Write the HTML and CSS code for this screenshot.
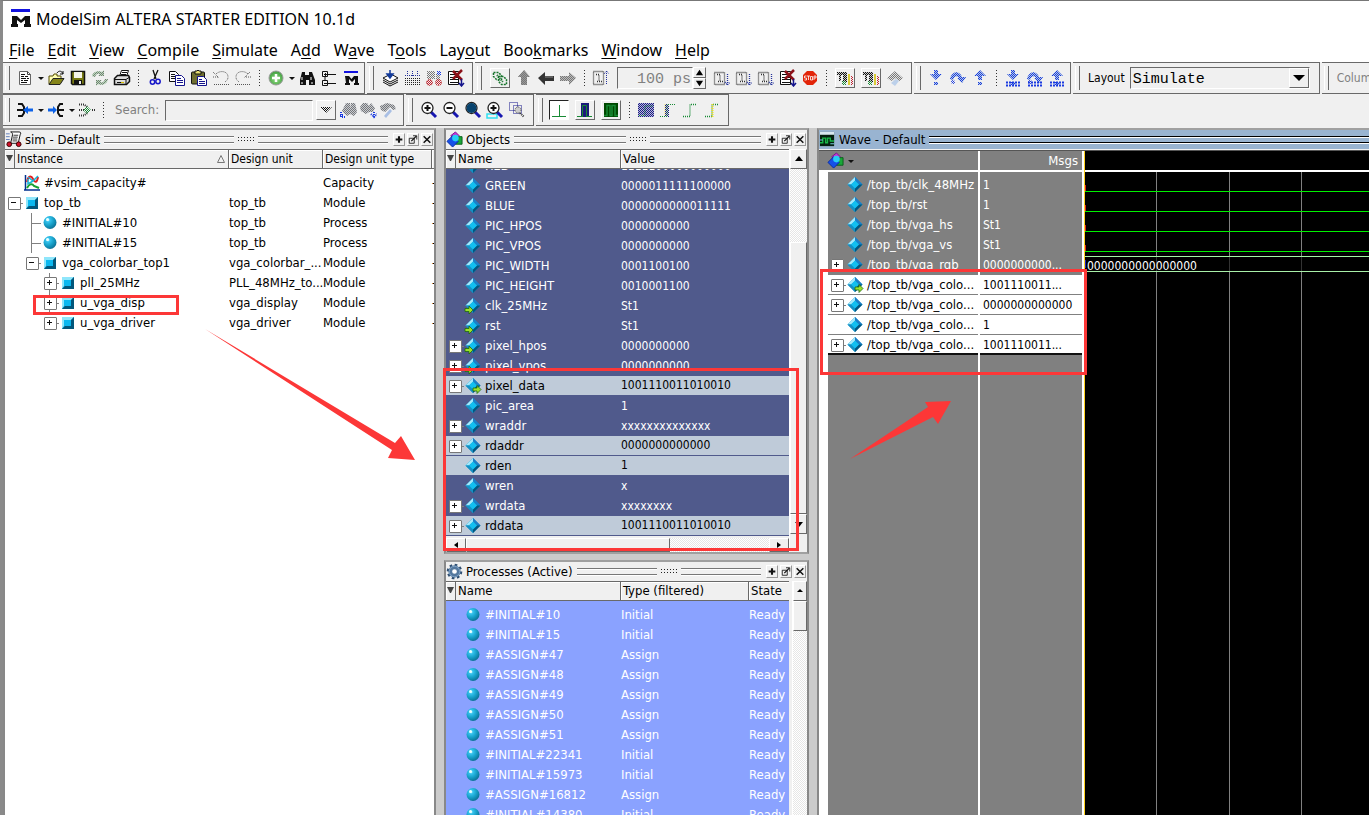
FILE: index.html
```html
<!DOCTYPE html>
<html lang="en">
<head>
<meta charset="utf-8">
<title>ModelSim ALTERA STARTER EDITION 10.1d</title>
<link rel="stylesheet" href="styles.css">
</head>
<body>
<svg class="defs" aria-hidden="true">
  <defs>
    <pattern id="pk" width="2" height="2" patternUnits="userSpaceOnUse"><path d="M0 0h1v1H0zM1 1h1v1H1z" fill="#111"/></pattern>
    <pattern id="pg" width="2" height="2" patternUnits="userSpaceOnUse"><path d="M0 0h1v1H0zM1 1h1v1H1z" fill="#777"/></pattern>
    <pattern id="pb" width="2" height="2" patternUnits="userSpaceOnUse"><path d="M0 0h1v1H0zM1 1h1v1H1z" fill="#1a3ae0"/></pattern>
    <pattern id="pn" width="2" height="2" patternUnits="userSpaceOnUse"><path d="M0 0h1v1H0zM1 1h1v1H1z" fill="#1c1c86"/></pattern>
    <pattern id="pv" width="2" height="2" patternUnits="userSpaceOnUse"><path d="M0 0h1v1H0zM1 1h1v1H1z" fill="#178a34"/></pattern>
    <pattern id="pr" width="2" height="2" patternUnits="userSpaceOnUse"><path d="M0 0h1v1H0zM1 1h1v1H1z" fill="#c02030"/></pattern>
    <radialGradient id="ballg" cx=".35" cy=".3" r=".75"><stop offset="0" stop-color="#d8fbff"/><stop offset=".2" stop-color="#35c3ee"/><stop offset=".6" stop-color="#159cc4"/><stop offset="1" stop-color="#0b6d92"/></radialGradient>
    <radialGradient id="greeng" cx=".5" cy=".6" r=".6"><stop offset="0" stop-color="#8fdc7f"/><stop offset="1" stop-color="#3f9c3f"/></radialGradient>
  </defs>
  <symbol id="cube" viewBox="0 0 18 20"><path d="M3 4h12v12H3z" fill="#0a9fd6"/><path d="M3 4h12l-3 3H5v6l-2 3z" fill="#8fe6fb"/><path d="M15 4v12H3l3-3h6V7z" fill="#02577c"/><path d="M5 7h7v6H5z" fill="#0bb8f0"/></symbol>
  <symbol id="ball" viewBox="0 0 18 20"><circle cx="9" cy="9.500" r="6.500" fill="url(#ballg)"/><circle cx="6.500" cy="6.500" r="1.500" fill="#eaffff"/></symbol>
  <symbol id="gem" viewBox="0 0 18 20"><path d="M9 2 16.500 9.500 9 17 1.500 9.500z" fill="#0b8fc8"/><path d="M9 2v4L5 9.500H1.500z" fill="#a5e9fb"/><path d="M9 2v4l4 3.500h3.500z" fill="#1c7fc9"/><path d="M9 17v-4L5 9.500H1.500z" fill="#1590c4"/><path d="M9 17v-4l4-3.500h3.500z" fill="#03567f"/><path d="M9 5.500 13 9.500 9 13.500 5 9.500z" fill="#12bff0"/></symbol>
  <symbol id="gemin" viewBox="0 0 18 20"><use href="#gem"/><path d="M1 12.500h4V10l4 4-4 4v-2.500H1z" fill="#9be02a" stroke="#1d6a10" stroke-width=".8"/></symbol>
  <symbol id="gemout" viewBox="0 0 18 20"><use href="#gem"/><path d="M9 12h4V9.500l4 4-4 4V15H9z" fill="#9be02a" stroke="#1d6a10" stroke-width=".8"/></symbol>
  <symbol id="tee" viewBox="0 0 18 20"><path d="M8.500 0v20M9 10.500h9" stroke="#808080" fill="none"/></symbol>
  <symbol id="cap" viewBox="0 0 18 20"><path d="M2 2h15v14H2z" fill="#fff"/><path d="M2.500 2v15.500M1 17h16" stroke="#00308f" stroke-width="1.500" fill="none"/><path d="M4 9c1-6 4-7 6-3s4 4 5-2" stroke="#e02020" stroke-width="2" fill="none"/><path d="m5 4 5 4 5-5M5 6v5l5-3" stroke="#17b4d8" stroke-width="1.500" fill="none"/><path d="M4 15c2-4 5-5 7-2l5 2" stroke="#18a030" stroke-width="2" fill="none"/></symbol>
  <symbol id="logo" viewBox="0 0 20 20"><path d="M0 0h19v3H0z" fill="#1212e0"/><path d="M1 7h5l4 4 4-4h5v8h1v3h-7v-3h1v-4l-4 3-4-3v4h1v3H0v-3h1z" fill="#111"/></symbol>
  <symbol id="new" viewBox="0 0 18 18"><path d="M3.500 2.500h8l3 3v10h-11z" fill="#fff" stroke="#666"/><path d="M11.500 2.500v3h3" fill="none" stroke="#444"/><path d="M5 5.500h4M5 7.500h3M9 7.500h3M5 9.500h5M11 9.500h2M5 11.500h2M8 11.500h4M5 13.500h6" stroke="#111"/></symbol>
  <symbol id="open" viewBox="0 0 18 18"><path d="M2 15V7h4l1-2h3v2h4v2" fill="#ffffb0" stroke="#554d00"/><path d="M2 15.500 6 9.500h11l-4 6z" fill="#85851a" stroke="#222"/><path d="M10 4c2-3 5-2 6 1m0-3v3h-3" fill="none" stroke="#111"/></symbol>
  <symbol id="save" viewBox="0 0 18 18"><path d="M2.500 2.500h13v13h-12l-1-1z" fill="#777a12" stroke="#111" stroke-width="1.500"/><path d="M5 3h8v6H5z" fill="#f5f5e8"/><path d="M5 11h8v4H5z" fill="#111"/><path d="M10 12h2v3h-2z" fill="#eee"/></symbol>
  <symbol id="reload" viewBox="0 0 18 18"><path d="M1 7c1-4 6-6 10-4l2-2v6H7l2-2C6 4 5 5 4 8zM17 10c-1 5-6 7-10 5l-2 2v-6h6l-2 2c3 1 4 0 5-3z" fill="#b5e0b8"/><path d="M1 7c1-4 6-6 10-4l2-2v6H7l2-2C6 4 5 5 4 8zM17 10c-1 5-6 7-10 5l-2 2v-6h6l-2 2c3 1 4 0 5-3z" fill="url(#pg)"/></symbol>
  <symbol id="print" viewBox="0 0 18 18"><path d="m6.500 7.500 2-6h7l-2 6z" fill="#fff" stroke="#111"/><path d="M9 3.500h5M8 5.500h5" stroke="#111"/><path d="m1.500 9.500 3-3h11l1 2v4l-3 3h-12z" fill="#ddd" stroke="#111" stroke-width="1.500"/><path d="M2 10.500h11l3-2M4 13.500h6M13 11v4" stroke="#111" fill="none"/><path d="M8 13h3v1H8z" fill="#d8c000"/></symbol>
  <symbol id="cut" viewBox="0 0 18 18"><path d="m7 1 3 9M12 1 8 10" stroke="#111" stroke-width="1.300"/><circle cx="6.500" cy="13" r="2.200" fill="none" stroke="#1717c8" stroke-width="1.500"/><circle cx="12" cy="12.500" r="2.200" fill="none" stroke="#1717c8" stroke-width="1.500"/></symbol>
  <symbol id="copy" viewBox="0 0 18 18"><path d="M1.500 2.500h6l3 3v7h-9z" fill="#fff" stroke="#111"/><path d="M3 5.500h4M3 7.500h4M3 9.500h4" stroke="#111"/><path d="M7.500 6.500h6l3 3v7h-9z" fill="#fff" stroke="#14148c"/><path d="M9 9.500h4M9 11.500h6M9 13.500h6" stroke="#14148c"/></symbol>
  <symbol id="paste" viewBox="0 0 18 18"><rect x="1.500" y="3" width="13" height="12" rx="1" fill="#6e6e30" stroke="#111"/><path d="M5 4V2h2l1-1 1 1h2v3H5z" fill="#e8e070" stroke="#111"/><path d="M7.500 7.500h6l3 3v6h-9z" fill="#fff" stroke="#14148c"/><path d="M9 10.500h3M9 12.500h6M9 14.500h6" stroke="#14148c"/></symbol>
  <symbol id="undo" viewBox="0 0 18 18"><path d="M4 5c4-4 12-3 12 3 0 3-2 4-3 5M1 3l6 6M1 8h6" fill="none" stroke="#555" stroke-dasharray="1 1"/><path d="M2 15.500h15" stroke="#555" stroke-dasharray="1 1"/></symbol>
  <symbol id="redo" viewBox="0 0 18 18"><path d="M14 5C10 1 2 2 2 8c0 3 2 4 3 5M16 3l-6 6M17 8h-6" fill="none" stroke="#555" stroke-dasharray="1 1"/><path d="M1 15.500h15" stroke="#555" stroke-dasharray="1 1"/></symbol>
  <symbol id="add" viewBox="0 0 18 18"><circle cx="9" cy="9" r="7" fill="url(#greeng)" stroke="#9a9a9a"/><path d="M9 5v8M5 9h8" stroke="#fff" stroke-width="2.500"/></symbol>
  <symbol id="find" viewBox="0 0 18 18"><path d="M4 3h3v3h4V3h3l3 8v5h-6v-5H8v5H2v-5z" fill="#111"/><path d="M4 8v3M13 8v3M4 13v2M14 13v2" stroke="#fff"/></symbol>
  <symbol id="tree" viewBox="0 0 18 18"><path d="M2.500 2.500h5v5h-5zM2.500 11.500h5v5h-5zM8 5.500h8M8 14.500h8M5 7v5" fill="none" stroke="#111"/><path d="M4 5.500h3M5.500 4v3M4 14.500h3" stroke="#111"/></symbol>
  <symbol id="mlogo" viewBox="0 0 18 18"><path d="M2 2h14v2H2z" fill="#1212e0"/><path d="M3 7h4l2.500 3L12 7h4v7h1v2h-5v-2h1v-4l-3 3-3-3v4h1v2H3v-2h1z" fill="#111"/></symbol>
  <symbol id="stack" viewBox="0 0 18 18"><path d="m2 9 8-4 7 4-8 4z" fill="#fff" stroke="#111"/><path d="m2 11 7 4 8-4M2 13l7 4 8-4" fill="none" stroke="#111"/><path d="M9 1v7M6 5l3 4 3-4z" stroke="#123a9a" stroke-width="1.500" fill="#123a9a"/></symbol>
  <symbol id="stackall" viewBox="0 0 18 18"><path d="M2 9.500h15M2 11.500h15M2 13.500h15M2 15.500h15" stroke="#222" stroke-dasharray="1 1"/><path d="M4.500 2v6M9.500 2v6M14.500 2v6M2 6.500h15" stroke="#22309a" stroke-dasharray="1 1"/></symbol>
  <symbol id="simrun" viewBox="0 0 18 18"><path d="M2 2h8v8H2zM11 5h4v6h-4z" fill="url(#pg)"/><path d="M12 2h4v4h-4z" fill="url(#pb)"/><circle cx="4.500" cy="13.500" r="3" fill="url(#pr)" stroke="#b33" stroke-dasharray="1 1"/><circle cx="13.500" cy="13.500" r="3" fill="url(#pr)" stroke="#b33" stroke-dasharray="1 1"/></symbol>
  <symbol id="break" viewBox="0 0 18 18"><path d="M1.500 2.500h10v13h-10z" fill="#fff" stroke="#111"/><path d="M3 5.500h7M3 8.500h8M3 10.500h8M3 13.500h8" stroke="#111"/><path d="m6 2 9 9M15 1 6 10" stroke="#8c1018" stroke-width="2.500"/><path d="M14.500 10v6M12 14l2.500 3 2.500-3" stroke="#14148c" fill="none" stroke-width="1.500"/></symbol>
  <symbol id="link" viewBox="0 0 18 18"><path d="M2.500 3.500h5l3 3v4h-5l-3-3zM7.500 7.500h5l3 3v5h-5l-3-3z" fill="none" stroke="#17742c" stroke-width="1.500" stroke-dasharray="2 1"/><path d="m6 6 6 7" stroke="#17742c" stroke-width="2" stroke-dasharray="1 1"/></symbol>
  <symbol id="up" viewBox="0 0 18 18"><path d="m9 1 6 7h-3v8H6V8H3z" fill="#999"/><path d="m9 1 6 7h-3v8H6V8H3z" fill="url(#pg)"/></symbol>
  <symbol id="back" viewBox="0 0 18 18"><path d="m1 9 7-6v4h9v5H8v4z" fill="#333"/><path d="M8 8h8" stroke="#888"/></symbol>
  <symbol id="fwd" viewBox="0 0 18 18"><path d="m17 9-7-6v4H1v5h9v4z" fill="#bbb"/><path d="m17 9-7-6v4H1v5h9v4z" fill="url(#pg)"/></symbol>
  <symbol id="stepup" viewBox="0 0 18 18"><path d="M1.500 2.500h10v13h-10zM4 5.500h3v7M5 12.500h5" fill="none" stroke="#333" stroke-width="1.300" stroke-dasharray="1 1"/><path d="M14.500 2v13M12 5l2.500-3L17 5" fill="none" stroke="#22309a" stroke-dasharray="1 1"/></symbol>
  <symbol id="step" viewBox="0 0 18 18"><path d="M1.500 3.500h10v12h-10zM4 5.500h3v7M5 12.500h5" fill="none" stroke="#333" stroke-width="1.300" stroke-dasharray="1 1"/><path d="M14.500 5v11M12 13l2.500 3 2.500-3" fill="none" stroke="#22309a" stroke-width="1.300" stroke-dasharray="1 1"/></symbol>
  <symbol id="stop" viewBox="0 0 18 18"><path d="M6 2h6l4 4v6l-4 4H6l-4-4V6z" fill="#e22408"/><path d="M5.500 7H3.500v2h2v2h-2M6 7h3M7.500 7v4M9.500 7.500h2v3.500h-2zM13 11V7h2v2h-2" fill="none" stroke="#fff" stroke-width=".8"/></symbol>
  <symbol id="prof" viewBox="0 0 18 18"><path d="M1 3h10v3H1zM7 6h4v7H7zM3 6h2v6H3z" fill="#ccc"/><path d="M1 3h10v3H1zM7 6h4v7H7zM3 6h2v6H3z" fill="url(#pk)"/><path d="M12 5h2v11h-2z" fill="#d8cc38"/><path d="M15 7h2v9h-2z" fill="url(#pr)"/><path d="M6 12h4v4H6z" fill="url(#pv)"/></symbol>
  <symbol id="hand" viewBox="0 0 18 18"><path d="M9 2 2 9l3 3 8 0 4-3z" fill="#e2e2e2"/><path d="m9 2 8 7-3 3-5-3-4 3-4-3z" fill="url(#pg)"/><path d="m5 14 5-4 3 2-4 5z" fill="#bcd0ea"/></symbol>
  <symbol id="sdown" viewBox="0 0 18 18"><path d="M7 1h4v4h4l-6 6-6-6h4zM7 13h4v3H7z" fill="#8fb4d8" opacity=".6"/><path d="M7 1h4v4h4l-6 6-6-6h4zM7 13h4v3H7z" fill="url(#pb)"/></symbol>
  <symbol id="sover" viewBox="0 0 18 18"><path d="M1 10c2-8 9-9 12-2h4l-4 6-5-5h2C8 6 5 7 4 11z" fill="#8fb4d8" opacity=".6"/><path d="M1 10c2-8 9-9 12-2h4l-4 6-5-5h2C8 6 5 7 4 11z" fill="url(#pb)"/><circle cx="4" cy="13" r="2" fill="url(#pb)"/></symbol>
  <symbol id="sup" viewBox="0 0 18 18"><path d="m9 1 6 6h-4v4H7V7H3zM7 13h4v3H7z" fill="#8fb4d8" opacity=".6"/><path d="m9 1 6 6h-4v4H7V7H3zM7 13h4v3H7z" fill="url(#pb)"/></symbol>
  <symbol id="bar" viewBox="0 0 18 18"><path d="M2 13.500h14M2 16.500h14" stroke="#1a3ae0" stroke-width="2" stroke-dasharray="2 1"/></symbol>
  <symbol id="expout" viewBox="0 0 18 18"><path d="M2 3h4l2 3v6l-2 3H2M1 9h6" fill="none" stroke="#111" stroke-width="2"/><path d="m7 9 5-4v2.500h5v3h-5V13z" fill="#0d62e8"/></symbol>
  <symbol id="expin" viewBox="0 0 18 18"><path d="M16 3h-3l-2 3v6l2 3h3M10 9h7" fill="none" stroke="#111" stroke-width="2"/><path d="m10 9-4-4v2.500H1v3h5V13z" fill="#0d62e8"/></symbol>
  <symbol id="net" viewBox="0 0 18 18"><path d="M1 3.500h5l4 3M1 9h6M1 14.500h5l4-3M14 9h3" fill="none" stroke="#333" stroke-width="2" stroke-dasharray="1 1"/><path d="m9 5 4 4-4 4-4-4z" fill="url(#pv)"/></symbol>
  <symbol id="binp" viewBox="0 0 18 18"><path d="m3 10 4-8h4v6l1-6h4l2 9-3 4-4-2-3 2z" fill="#c8ccd4"/><path d="m3 10 4-8h4v6l1-6h4l2 9-3 4-4-2-3 2z" fill="url(#pg)"/><path d="M2 11v5h5M1 14h4" fill="none" stroke="#1a3ae0" stroke-width="2" stroke-dasharray="1 1"/></symbol>
  <symbol id="binn" viewBox="0 0 18 18"><path d="M1 6 4 2h4l2 3 2-3 4 5-2 4h-4l-3 2-5-3z" fill="#c8ccd4"/><path d="M1 6 4 2h4l2 3 2-3 4 5-2 4h-4l-3 2-5-3z" fill="url(#pg)"/><path d="M15 11v5M12 13l3 3 3-3" fill="none" stroke="#1a3ae0" stroke-width="2" stroke-dasharray="1 1"/></symbol>
  <symbol id="brush" viewBox="0 0 18 18"><path d="m1 5 7-3 7 2 2 4-3 1-3-3-5 5-4-2z" fill="#c4c8ce"/><path d="m1 5 7-3 7 2 2 4-3 1-3-3-5 5-4-2z" fill="url(#pg)"/><path d="m5 15 6-7 2 2-6 7z" fill="#a9bfe4"/></symbol>
  <symbol id="mag" viewBox="0 0 18 18"><path d="m11 11 5 5" stroke="#1717b0" stroke-width="3"/><circle cx="7.500" cy="7" r="5.500" fill="#fff" stroke="#222" stroke-width="1.300"/></symbol>
  <symbol id="zin" viewBox="0 0 18 18"><use href="#mag"/><path d="M7.500 4v6M4.500 7h6" stroke="#111" stroke-width="2"/></symbol>
  <symbol id="zout" viewBox="0 0 18 18"><use href="#mag"/><path d="M4.500 7h6" stroke="#111" stroke-width="2"/></symbol>
  <symbol id="zfull" viewBox="0 0 18 18"><use href="#mag"/><circle cx="7.500" cy="7" r="5" fill="#07436e"/></symbol>
  <symbol id="zcur" viewBox="0 0 18 18"><path d="M1 13h10v4H1z" fill="none" stroke="#2fe0f0" stroke-width="1.500"/><use href="#zin"/></symbol>
  <symbol id="zsel" viewBox="0 0 18 18"><path d="M1.500 1.500h8v8h-8zM5.500 4.500h8v8h-8z" fill="none" stroke="#14148c" stroke-dasharray="1 1"/><circle cx="10" cy="9" r="3" fill="#ccc" stroke="#444" stroke-dasharray="1 1"/><path d="m12 12 4 4" stroke="#333" stroke-width="2" stroke-dasharray="1 1"/></symbol>
  <symbol id="w1" viewBox="0 0 18 18"><path d="M2 15.500h14M9.500 4v12" stroke="#178a34" fill="none"/></symbol>
  <symbol id="w2" viewBox="0 0 18 18"><path d="M5 2h8v14H5z" fill="#1c1c7a"/><path d="M1 15.500h5M12 15.500h4M6.500 16V4.500h4V15.500h2" fill="none" stroke="#178a34"/></symbol>
  <symbol id="w3" viewBox="0 0 18 18"><path d="M2 2h14v14H2z" fill="#004800"/><path d="M2 14.500h3V4.500h3v10h2V4.500h3v10h3" fill="none" stroke="#178a34" stroke-width="1.500"/></symbol>
  <symbol id="w4" viewBox="0 0 18 18"><path d="M1 2h16v14H1z" fill="#b9b9d8"/><path d="M1 2h16v14H1z" fill="url(#pn)"/><path d="M2 14.500h6V5h8" fill="none" stroke="#178a34" stroke-dasharray="1 1"/></symbol>
  <symbol id="w5" viewBox="0 0 18 18"><path d="M6 3h4v13H6z" fill="url(#pn)"/><path d="M1 15.500h7V3.500h8" fill="none" stroke="#178a34" stroke-dasharray="1 1"/><path d="M6 3v12" stroke="#f0e060" stroke-dasharray="1 1"/></symbol>
  <symbol id="w6" viewBox="0 0 18 18"><path d="M2 15.500h7V3.500h7" fill="none" stroke="#178a34" stroke-dasharray="1 1" stroke-width="1.300"/></symbol>
  <symbol id="w7" viewBox="0 0 18 18"><use href="#w6"/><path d="M9.500 3v13" stroke="#f0e020" stroke-width="2" stroke-dasharray="1 1"/></symbol>
  <symbol id="caret" viewBox="0 0 9 18"><path d="M2 8h6L5 11z" fill="#111"/></symbol>
  <symbol id="shapes" viewBox="0 0 18 18"><path d="m5 5 5-4 4 4-5 4z" fill="#c23ad8" stroke="#7a1090"/><path d="M10 6h7v8h-7z" fill="#19a838" stroke="#0b5d1c"/><path d="m7 5 6 6-6 6-6-6z" fill="#1550e8" stroke="#0a2aa0"/><circle cx="10" cy="7.500" r="3.500" fill="#27cdf5"/></symbol>
  <symbol id="gear" viewBox="0 0 18 18"><circle cx="9" cy="9" r="7" fill="none" stroke="#2e4d70" stroke-width="2.500" stroke-dasharray="2.750 2.750"/><circle cx="9" cy="9" r="4.500" fill="#fff" stroke="#54789e" stroke-width="4"/><circle cx="9" cy="9" r="5.500" fill="none" stroke="#7fa3c6" stroke-width="1"/></symbol>
  <symbol id="simicon" viewBox="0 0 18 18"><path d="M6 1h9c2 0 2 2 1 3l-2 9H6l2-9C8 2 7 1 6 1z" fill="#fff" stroke="#111"/><path d="M9 4.500h5M8.500 6.500h5M8 8.500h5M8 10.500h5" stroke="#333"/><path d="M1 3h4M1 6h4M1 9h4" stroke="#5b7ab8"/><circle cx="4.500" cy="14" r="2.500" fill="#d01028" stroke="#300"/><circle cx="14.500" cy="14" r="2.500" fill="#d01028" stroke="#300"/></symbol>
  <symbol id="waveicon" viewBox="0 0 18 18"><path d="M1 1h15v15H1z" fill="#062010"/><path d="M1 1h15v3H1z" fill="#d8e8f0"/><path d="M1 12.500h3v-5h3v5h2v-5h3v3h4" fill="none" stroke="#18b848" stroke-width="1.500"/><path d="M1 9.500h3M12 13.500h4" stroke="#7cd8e8"/></symbol>
  <symbol id="plus" viewBox="0 0 12 12"><path d="M6 2v8M2 6h8" stroke="#111" stroke-width="2.500"/></symbol>
  <symbol id="undock" viewBox="0 0 12 12"><path d="M1.500 4.500h6v6h-6zM6 1.500h4.500V6" fill="none" stroke="#111"/><path d="m4 8 6-6" stroke="#111" stroke-width="1.500"/></symbol>
  <symbol id="x" viewBox="0 0 12 12"><path d="m2 2 8 8M10 2l-8 8" stroke="#111" stroke-width="1.800"/></symbol>
  <symbol id="filter" viewBox="0 0 9 18"><path d="M1 5h7L5 11H4z" fill="#444"/></symbol>
</svg>

<header class="titlebar"><svg class="applogo"><use href="#logo"/></svg><h1>ModelSim ALTERA STARTER EDITION 10.1d</h1></header>
<nav class="menubar">
  <button><u>F</u>ile</button><button><u>E</u>dit</button><button><u>V</u>iew</button><button><u>C</u>ompile</button><button><u>S</u>imulate</button><button>A<u>d</u>d</button><button>W<u>a</u>ve</button><button>T<u>o</u>ols</button><button>Lay<u>o</u>ut</button><button>Boo<u>k</u>marks</button><button><u>W</u>indow</button><button><u>H</u>elp</button>
</nav>

<div class="toolbars">
  <div class="row">
    <div class="group tight">
      <button class="tb" aria-label="New"><svg><use href="#new"/></svg></button><button class="dd" aria-label="New options"><svg><use href="#caret"/></svg></button>
      <button class="tb" aria-label="Open"><svg><use href="#open"/></svg></button>
      <button class="tb" aria-label="Save"><svg><use href="#save"/></svg></button>
      <button class="tb" aria-label="Reload"><svg><use href="#reload"/></svg></button>
      <button class="tb" aria-label="Print"><svg><use href="#print"/></svg></button>
      <span class="sep"></span>
      <button class="tb" aria-label="Cut"><svg><use href="#cut"/></svg></button>
      <button class="tb" aria-label="Copy"><svg><use href="#copy"/></svg></button>
      <button class="tb" aria-label="Paste"><svg><use href="#paste"/></svg></button>
      <button class="tb" aria-label="Undo"><svg><use href="#undo"/></svg></button>
      <button class="tb" aria-label="Redo"><svg><use href="#redo"/></svg></button>
      <span class="sep"></span>
      <button class="tb" aria-label="Add"><svg><use href="#add"/></svg></button><button class="dd" aria-label="Add options"><svg><use href="#caret"/></svg></button>
      <button class="tb" aria-label="Find"><svg><use href="#find"/></svg></button>
      <button class="tb" aria-label="Collapse all"><svg><use href="#tree"/></svg></button>
      <button class="tb" aria-label="ModelSim"><svg><use href="#mlogo"/></svg></button>
    </div>
    <div class="group">
      <button class="tb" aria-label="Compile"><svg><use href="#stack"/></svg></button>
      <button class="tb" aria-label="Compile all"><svg><use href="#stackall"/></svg></button>
      <button class="tb" aria-label="Simulate"><svg><use href="#simrun"/></svg></button>
      <button class="tb" aria-label="Break"><svg><use href="#break"/></svg></button>
    </div>
    <div class="group">
      <button class="tb raised" aria-label="Link"><svg><use href="#link"/></svg></button>
      <button class="tb" aria-label="Up"><svg><use href="#up"/></svg></button>
      <button class="tb" aria-label="Back"><svg><use href="#back"/></svg></button>
      <button class="tb" aria-label="Forward"><svg><use href="#fwd"/></svg></button>
      <span class="sep"></span>
      <button class="tb" aria-label="Restart"><svg><use href="#stepup"/></svg></button>
      <span class="spin"><input aria-label="Run length" value="100 ps"><span class="spinbtns"><button aria-label="Increase"><svg viewBox="0 0 12 10"><path d="M6 2 10 8H2z"/></svg></button><button aria-label="Decrease"><svg viewBox="0 0 12 10"><path d="M6 8 10 2H2z"/></svg></button></span></span>
      <button class="tb" aria-label="Run"><svg><use href="#step"/></svg></button>
      <button class="tb" aria-label="Continue"><svg><use href="#step"/></svg></button>
      <button class="tb" aria-label="Run all"><svg><use href="#step"/></svg></button>
      <button class="tb" aria-label="Break run"><svg><use href="#break"/></svg></button>
      <button class="tb" aria-label="Stop"><svg><use href="#stop"/></svg></button>
      <span class="sep"></span>
      <button class="tb raised" aria-label="Performance profiling"><svg><use href="#prof"/></svg></button>
      <button class="tb raised" aria-label="Memory profiling"><svg><use href="#prof"/></svg></button>
      <button class="tb" aria-label="Edit breakpoints"><svg><use href="#hand"/></svg></button>
    </div>
    <div class="group tight">
      <button class="tb" aria-label="Step into"><svg><use href="#sdown"/></svg></button>
      <button class="tb" aria-label="Step over"><svg><use href="#sover"/></svg></button>
      <button class="tb" aria-label="Step out"><svg><use href="#sup"/></svg></button>
      <span class="sep"></span>
      <button class="tb" aria-label="Step into current"><svg><use href="#sdown"/><use href="#bar"/></svg></button>
      <button class="tb" aria-label="Step over current"><svg><use href="#sover"/><use href="#bar"/></svg></button>
      <button class="tb" aria-label="Step out current"><svg><use href="#sup"/><use href="#bar"/></svg></button>
    </div>
    <div class="group combo">
      <label for="layout">Layout</label>
      <span class="selbox"><select id="layout"><option>Simulate</option></select><svg class="selarrow" viewBox="0 0 18 18"><path d="M3 6h12l-6 6z"/></svg></span>
    </div>
    <div class="group last"><span class="mute">ColumnLayout</span></div>
  </div>
  <div class="row">
    <div class="group finder">
      <button class="tb" aria-label="Expand drivers"><svg><use href="#expout"/></svg></button><button class="dd" aria-label="Driver options"><svg><use href="#caret"/></svg></button>
      <button class="tb" aria-label="Expand readers"><svg><use href="#expin"/></svg></button><button class="dd" aria-label="Reader options"><svg><use href="#caret"/></svg></button>
      <button class="tb" aria-label="Expand net"><svg><use href="#net"/></svg></button>
      <span class="sep"></span>
      <label class="mute search" for="search">Search:</label><input id="search" class="searchbox"><button class="tb raised history" aria-label="Search history"><svg viewBox="0 0 18 18"><path d="M3 6h12l-6 6z" fill="url(#pk)"/></svg></button>
      <button class="tb slim" aria-label="Find previous"><svg><use href="#binp"/></svg></button>
      <button class="tb slim" aria-label="Find next"><svg><use href="#binn"/></svg></button>
      <button class="tb slim" aria-label="Search options"><svg><use href="#brush"/></svg></button>
    </div>
    <div class="group">
      <button class="tb" aria-label="Zoom in"><svg><use href="#zin"/></svg></button>
      <button class="tb" aria-label="Zoom out"><svg><use href="#zout"/></svg></button>
      <button class="tb" aria-label="Zoom full"><svg><use href="#zfull"/></svg></button>
      <button class="tb" aria-label="Zoom cursor"><svg><use href="#zcur"/></svg></button>
      <button class="tb" aria-label="Zoom selection"><svg><use href="#zsel"/></svg></button>
    </div>
    <div class="group views">
      <button class="tb sunk" aria-label="Edge view"><svg><use href="#w1"/></svg></button>
      <button class="tb raised" aria-label="Pulse view"><svg><use href="#w2"/></svg></button>
      <button class="tb raised" aria-label="Clock view"><svg><use href="#w3"/></svg></button>
      <span class="sep"></span>
      <button class="tb" aria-label="Expanded time off"><svg><use href="#w4"/></svg></button>
      <button class="tb" aria-label="Deltas"><svg><use href="#w5"/></svg></button>
      <button class="tb" aria-label="Events"><svg><use href="#w6"/></svg></button>
      <button class="tb" aria-label="Expand at cursor"><svg><use href="#w7"/></svg></button>
    </div>
  </div>
</div>

<main class="work">
  <section class="panel sim">
    <div class="ptitle"><svg class="picon"><use href="#simicon"/></svg><h2>sim - Default</h2><span class="lines"></span><span class="dots"></span><span class="lines"></span><button aria-label="Zoom pane"><svg><use href="#plus"/></svg></button><button aria-label="Undock"><svg><use href="#undock"/></svg></button><button aria-label="Close"><svg><use href="#x"/></svg></button></div>
    <table class="grid simgrid">
      <colgroup><col class="c-inst"><col class="c-unit"><col class="c-type"><col></colgroup>
      <thead><tr><th><span class="hd"><svg class="filt"><use href="#filter"/></svg><span>Instance</span><svg class="sort" viewBox="0 0 8 8"><path d="M4 .5 7.500 7.500H.5z"/></svg></span></th><th>Design unit</th><th>Design unit type</th><th></th></tr></thead>
      <tbody>
        <tr><td><span class="node"><i class="slot"></i><svg class="slot"><use href="#cap"/></svg>#vsim_capacity#</span></td><td></td><td>Capacity</td><td>-</td></tr>
        <tr><td><span class="node"><button class="slot ex minus" aria-label="Collapse"></button><svg class="slot"><use href="#cube"/></svg>top_tb</span></td><td>top_tb</td><td>Module</td><td>-</td></tr>
        <tr><td><span class="node"><i class="slot"></i><svg class="slot"><use href="#tee"/></svg><svg class="slot"><use href="#ball"/></svg>#INITIAL#10</span></td><td>top_tb</td><td>Process</td><td>-</td></tr>
        <tr><td><span class="node"><i class="slot"></i><svg class="slot"><use href="#tee"/></svg><svg class="slot"><use href="#ball"/></svg>#INITIAL#15</span></td><td>top_tb</td><td>Process</td><td>-</td></tr>
        <tr><td><span class="node"><i class="slot"></i><button class="slot ex minus" aria-label="Collapse"></button><svg class="slot"><use href="#cube"/></svg>vga_colorbar_top1</span></td><td>vga_colorbar_...</td><td>Module</td><td>-</td></tr>
        <tr><td><span class="node"><i class="slot"></i><i class="slot"></i><button class="slot ex branch" aria-label="Expand"></button><svg class="slot"><use href="#cube"/></svg>pll_25MHz</span></td><td>PLL_48MHz_to...</td><td>Module</td><td>-</td></tr>
        <tr><td><span class="node"><i class="slot"></i><i class="slot"></i><button class="slot ex branch" aria-label="Expand"></button><svg class="slot"><use href="#cube"/></svg>u_vga_disp</span></td><td>vga_display</td><td>Module</td><td>-</td></tr>
        <tr><td><span class="node"><i class="slot"></i><i class="slot"></i><button class="slot ex" aria-label="Expand"></button><svg class="slot"><use href="#cube"/></svg>u_vga_driver</span></td><td>vga_driver</td><td>Module</td><td>-</td></tr>
      </tbody>
    </table>
  </section>

  <div class="middle">
    <section class="panel objects">
      <div class="ptitle"><svg class="picon"><use href="#shapes"/></svg><h2>Objects</h2><span class="lines"></span><span class="dots"></span><span class="lines"></span><button aria-label="Zoom pane"><svg><use href="#plus"/></svg></button><button aria-label="Undock"><svg><use href="#undock"/></svg></button><button aria-label="Close"><svg><use href="#x"/></svg></button></div>
      <div class="pbody">
        <div class="pleft">
          <table class="grid objgrid">
            <colgroup><col class="c-name"><col></colgroup>
            <thead><tr><th><span class="hd"><svg class="filt"><use href="#filter"/></svg><span>Name</span></span></th><th>Value</th></tr></thead>
            <tbody>
              <tr class="cut"><td><span class="node"><i class="slot"></i><svg class="slot"><use href="#gem"/></svg>RED</span></td><td><span class="node">1111100000000000</span></td></tr>
              <tr><td><span class="node"><i class="slot"></i><svg class="slot"><use href="#gem"/></svg>GREEN</span></td><td>0000011111100000</td></tr>
              <tr><td><span class="node"><i class="slot"></i><svg class="slot"><use href="#gem"/></svg>BLUE</span></td><td>0000000000011111</td></tr>
              <tr><td><span class="node"><i class="slot"></i><svg class="slot"><use href="#gem"/></svg>PIC_HPOS</span></td><td>0000000000</td></tr>
              <tr><td><span class="node"><i class="slot"></i><svg class="slot"><use href="#gem"/></svg>PIC_VPOS</span></td><td>0000000000</td></tr>
              <tr><td><span class="node"><i class="slot"></i><svg class="slot"><use href="#gem"/></svg>PIC_WIDTH</span></td><td>0001100100</td></tr>
              <tr><td><span class="node"><i class="slot"></i><svg class="slot"><use href="#gem"/></svg>PIC_HEIGHT</span></td><td>0010001100</td></tr>
              <tr><td><span class="node"><i class="slot"></i><svg class="slot"><use href="#gemin"/></svg>clk_25MHz</span></td><td>St1</td></tr>
              <tr><td><span class="node"><i class="slot"></i><svg class="slot"><use href="#gemin"/></svg>rst</span></td><td>St1</td></tr>
              <tr><td><span class="node"><button class="slot ex" aria-label="Expand"></button><svg class="slot"><use href="#gemin"/></svg>pixel_hpos</span></td><td>0000000000</td></tr>
              <tr><td><span class="node"><button class="slot ex" aria-label="Expand"></button><svg class="slot"><use href="#gemin"/></svg>pixel_vpos</span></td><td>0000000000</td></tr>
              <tr class="sel"><td><span class="node"><button class="slot ex" aria-label="Expand"></button><svg class="slot"><use href="#gemout"/></svg>pixel_data</span></td><td>1001110011010010</td></tr>
              <tr><td><span class="node"><i class="slot"></i><svg class="slot"><use href="#gem"/></svg>pic_area</span></td><td>1</td></tr>
              <tr><td><span class="node"><button class="slot ex" aria-label="Expand"></button><svg class="slot"><use href="#gem"/></svg>wraddr</span></td><td>xxxxxxxxxxxxxx</td></tr>
              <tr class="sel"><td><span class="node"><button class="slot ex" aria-label="Expand"></button><svg class="slot"><use href="#gem"/></svg>rdaddr</span></td><td>0000000000000</td></tr>
              <tr class="sel"><td><span class="node"><i class="slot"></i><svg class="slot"><use href="#gem"/></svg>rden</span></td><td>1</td></tr>
              <tr><td><span class="node"><i class="slot"></i><svg class="slot"><use href="#gem"/></svg>wren</span></td><td>x</td></tr>
              <tr><td><span class="node"><button class="slot ex" aria-label="Expand"></button><svg class="slot"><use href="#gem"/></svg>wrdata</span></td><td>xxxxxxxx</td></tr>
              <tr class="sel"><td><span class="node"><button class="slot ex" aria-label="Expand"></button><svg class="slot"><use href="#gem"/></svg>rddata</span></td><td>1001110011010010</td></tr>
            </tbody>
          </table>
          <div class="hscroll"><button aria-label="Scroll left"><svg viewBox="0 0 10 10"><path d="M7 2v6L3 5z"/></svg></button><span class="hthumb"></span><span class="trough"></span><button aria-label="Scroll right"><svg viewBox="0 0 10 10"><path d="M3 2v6l4-3z"/></svg></button></div>
        </div>
        <div class="vscroll"><button aria-label="Scroll up"><svg viewBox="0 0 10 10"><path d="M5 2 9 7H1z"/></svg></button><span class="trough t-obj"></span><span class="vthumb grow"></span><button aria-label="Scroll down"><svg viewBox="0 0 10 10"><path d="M5 8 9 3H1z"/></svg></button><span class="corner"></span></div>
      </div>
    </section>
    <section class="panel procs">
      <div class="ptitle"><svg class="picon"><use href="#gear"/></svg><h2>Processes (Active)</h2><span class="lines"></span><span class="dots"></span><span class="lines"></span><button aria-label="Zoom pane"><svg><use href="#plus"/></svg></button><button aria-label="Undock"><svg><use href="#undock"/></svg></button><button aria-label="Close"><svg><use href="#x"/></svg></button></div>
      <div class="pbody">
        <div class="pleft">
          <table class="grid procgrid">
            <colgroup><col class="c-name"><col class="c-filter"><col></colgroup>
            <thead><tr><th><span class="hd"><svg class="filt"><use href="#filter"/></svg><span>Name</span></span></th><th>Type (filtered)</th><th>State</th></tr></thead>
            <tbody>
              <tr><td><span class="node"><i class="slot"></i><svg class="slot"><use href="#ball"/></svg>#INITIAL#10</span></td><td>Initial</td><td>Ready</td></tr>
              <tr><td><span class="node"><i class="slot"></i><svg class="slot"><use href="#ball"/></svg>#INITIAL#15</span></td><td>Initial</td><td>Ready</td></tr>
              <tr><td><span class="node"><i class="slot"></i><svg class="slot"><use href="#ball"/></svg>#ASSIGN#47</span></td><td>Assign</td><td>Ready</td></tr>
              <tr><td><span class="node"><i class="slot"></i><svg class="slot"><use href="#ball"/></svg>#ASSIGN#48</span></td><td>Assign</td><td>Ready</td></tr>
              <tr><td><span class="node"><i class="slot"></i><svg class="slot"><use href="#ball"/></svg>#ASSIGN#49</span></td><td>Assign</td><td>Ready</td></tr>
              <tr><td><span class="node"><i class="slot"></i><svg class="slot"><use href="#ball"/></svg>#ASSIGN#50</span></td><td>Assign</td><td>Ready</td></tr>
              <tr><td><span class="node"><i class="slot"></i><svg class="slot"><use href="#ball"/></svg>#ASSIGN#51</span></td><td>Assign</td><td>Ready</td></tr>
              <tr><td><span class="node"><i class="slot"></i><svg class="slot"><use href="#ball"/></svg>#INITIAL#22341</span></td><td>Initial</td><td>Ready</td></tr>
              <tr><td><span class="node"><i class="slot"></i><svg class="slot"><use href="#ball"/></svg>#INITIAL#15973</span></td><td>Initial</td><td>Ready</td></tr>
              <tr><td><span class="node"><i class="slot"></i><svg class="slot"><use href="#ball"/></svg>#ASSIGN#16812</span></td><td>Assign</td><td>Ready</td></tr>
              <tr><td><span class="node"><i class="slot"></i><svg class="slot"><use href="#ball"/></svg>#INITIAL#14380</span></td><td>Initial</td><td>Ready</td></tr>
            </tbody>
          </table>
        </div>
        <div class="vscroll narrow"><button aria-label="Scroll up"><svg viewBox="0 0 10 10"><path d="M5 3 8 6H2z"/></svg></button><span class="vthumb t-proc"></span><span class="trough grow"></span></div>
      </div>
    </section>
  </div>

  <section class="panel wave">
    <div class="ptitle active"><svg class="picon"><use href="#waveicon"/></svg><h2>Wave - Default</h2><span class="lines"></span></div>
    <div class="wbody">
      <div class="wcol names">
        <div class="whead"><svg class="picon"><use href="#shapes"/></svg><svg class="car"><use href="#caret"/></svg></div>
        <div class="wrows">
          <div class="node"><i class="slot"></i><svg class="slot"><use href="#gem"/></svg>/top_tb/clk_48MHz</div>
          <div class="node"><i class="slot"></i><svg class="slot"><use href="#gem"/></svg>/top_tb/rst</div>
          <div class="node"><i class="slot"></i><svg class="slot"><use href="#gem"/></svg>/top_tb/vga_hs</div>
          <div class="node"><i class="slot"></i><svg class="slot"><use href="#gem"/></svg>/top_tb/vga_vs</div>
          <div class="node"><button class="slot ex" aria-label="Expand"></button><svg class="slot"><use href="#gem"/></svg>/top_tb/vga_rgb</div>
          <div class="node lit"><button class="slot ex" aria-label="Expand"></button><svg class="slot"><use href="#gemout"/></svg>/top_tb/vga_colo...</div>
          <div class="node lit"><button class="slot ex" aria-label="Expand"></button><svg class="slot"><use href="#gem"/></svg>/top_tb/vga_colo...</div>
          <div class="node lit"><i class="slot"></i><svg class="slot"><use href="#gem"/></svg>/top_tb/vga_colo...</div>
          <div class="node lit end"><button class="slot ex" aria-label="Expand"></button><svg class="slot"><use href="#gem"/></svg>/top_tb/vga_colo...</div>
        </div>
      </div>
      <div class="wcol values">
        <div class="whead msgs">Msgs</div>
        <div class="wrows">
          <div class="val">1</div><div class="val">1</div><div class="val">St1</div><div class="val">St1</div><div class="val">0000000000...</div>
          <div class="val lit">1001110011...</div><div class="val lit">0000000000000</div><div class="val lit">1</div><div class="val lit end">1001110011...</div>
        </div>
      </div>
      <div class="wcol plot">
        <div class="whead"></div>
        <svg class="signals">
          <path d="M71.500 0v2000M144.500 0v2000M216.500 0v2000M289.500 0v2000M361.500 0v2000" stroke="#808080"/>
          <g stroke="#00f000"><line x1="0" x2="100%" y1="19.500" y2="19.500"/><line x1="0" x2="100%" y1="39.500" y2="39.500"/><line x1="0" x2="100%" y1="59.500" y2="59.500"/><line x1="0" x2="100%" y1="79.500" y2="79.500"/></g>
          <rect x="1" y="84" width="100%" height="15" fill="#000"/>
          <g stroke="#a8f0a8"><line x1="0" x2="100%" y1="84.500" y2="84.500"/><line x1="0" x2="100%" y1="99.500" y2="99.500"/></g>
          <path d="M71.500 85v14M144.500 85v14M216.500 85v14M289.500 85v14" stroke="#333"/>
          <path d="M.5 13v6M.5 33v6M.5 53v6M.5 73v6" stroke="#e02020"/><path d="M.5 88v8" stroke="#2020c0"/>
          <text x="2" y="98">0000000000000000</text>
        </svg>
      </div>
    </div>
  </section>
</main>

<svg class="marks" aria-hidden="true">
  <g fill="none" stroke="#fc3737" stroke-width="3"><rect x="34.500" y="296.500" width="143" height="17"/><rect x="444.500" y="369.500" width="353" height="180"/><rect x="821.500" y="270.500" width="264" height="103"/></g>
  <g fill="#fc3737"><path d="m205 329 190 114 6-7 14 24-27-2 4-8z"/><path d="m850 459 78-52-3-5 26-1-13 23-5-7z"/></g>
</svg>
</body>
</html>
```
FILE: styles.css
```css
* { box-sizing: border-box; }
:root { --ui: "DejaVu Sans Condensed", "Noto Sans", sans-serif; --line: #696969; --face: #f0f0f0; }
body { margin: 0; height: 100vh; overflow: hidden; display: flex; flex-direction: column; background: #fff; border-top: 1px solid #777; border-left: 3px solid #8a8a8a; font: 13px/20px var(--ui); color: #000; position: relative; }
button { font: inherit; color: inherit; border: 0; padding: 0; margin: 0; background: none; flex: none; }
h1, h2 { margin: 0; font-weight: normal; }
svg { flex: none; display: block; }
.defs { position: absolute; width: 0; height: 0; }

.titlebar { height: 36px; flex: none; display: flex; align-items: center; gap: 5px; padding-left: 8px; }
.titlebar h1 { font: 16px/24px "Noto Sans", sans-serif; }
.applogo { width: 20px; height: 20px; }
.menubar { height: 25px; flex: none; display: flex; gap: 13px; padding-left: 6px; font: 16px/24px "Noto Sans", sans-serif; }
.menubar u { text-underline-offset: 2px; }

.toolbars { flex: none; background: var(--face); height: 66px; overflow: hidden; }
.row { display: flex; height: 32px; }
.group { flex: none; display: flex; align-items: center; height: 32px; padding: 0 5px 0 12px; border-top: 1px solid var(--line); border-right: 1px solid var(--line); border-bottom: 1px solid var(--line); margin-right: 2px; position: relative; }
.group::before { content: ""; position: absolute; left: 2px; top: 3px; bottom: 3px; width: 3px; border-left: 1px solid #fff; border-right: 1px solid var(--line); }
.tight { padding: 0 2px 0 11px; }
.finder { padding: 0 5px 0 11px; }
.tb { width: 22px; height: 22px; display: grid; place-items: center; }
.tb svg { width: 18px; height: 18px; }
.slim { width: 20px; }
.dd { width: 9px; height: 22px; }
.dd svg, .car { width: 9px; height: 18px; }
.sep { width: 11px; height: 16px; background: linear-gradient(90deg, transparent 5px, #333 5px, #333 6px, transparent 6px); -webkit-mask: repeating-linear-gradient(#000 0 1px, transparent 1px 3px); mask: repeating-linear-gradient(#000 0 1px, transparent 1px 3px); }
.raised { width: 20px; height: 20px; margin: 0 3px; border: 1px solid; border-color: #fff var(--line) var(--line) #fff; }
.history { margin-right: 2px; }
.sunk { width: 20px; height: 20px; margin: 0 3px; border: 1px solid; border-color: #222 #fff #fff #222; background: #fff; }
.mute { color: #808080; }
.spin { display: flex; height: 22px; margin: 0 5px; }
.spin input { width: 76px; font: 15px/18px "Liberation Mono", monospace; color: #808080; text-align: right; background: var(--face); border: 1px solid; border-color: var(--line) #fff #fff var(--line); padding: 3px 1px 0; outline: 0; }
.spinbtns { display: flex; flex-direction: column; }
.spinbtns button { width: 13px; height: 11px; border: 1px solid; border-color: #fff var(--line) var(--line) #fff; }
.spinbtns svg { width: 11px; height: 9px; }
.combo { padding: 0 9px 0 15px; gap: 5px; }
.combo label, .last { font-size: 12px; }
.selbox { position: relative; display: block; width: 180px; height: 22px; }
.selbox select { appearance: none; display: block; width: 100%; height: 22px; border: 1px solid; border-color: var(--line) #fff #fff var(--line); background: var(--face); font: 15px/18px "Liberation Mono", monospace; padding: 3px 2px 0; border-radius: 0; color: #000; }
.selarrow { position: absolute; right: 1px; top: 1px; width: 20px; height: 20px; background: var(--face); border: 1px solid; border-color: #fff var(--line) var(--line) #fff; }
.last { flex: 1; min-width: 0; margin: 0; overflow: hidden; border-right: 0; padding-left: 15px; }
.search { padding: 0 6px; }
.searchbox { width: 148px; height: 21px; border: 1px solid; border-color: var(--line) #fff #fff var(--line); background: var(--face); }
.views { padding-left: 10px; }

.work { flex: 1; min-height: 0; display: flex; background: #cbcbcb; }
.panel { background: var(--face); border: 2px solid; border-color: #a0a0a0 #888 #a0a0a0 #888; display: flex; flex-direction: column; min-width: 0; overflow: hidden; }
.sim { width: 433px; flex: none; border-bottom: 0; background: #fff; }
.middle { width: 365px; flex: none; margin: 0 8px; display: flex; flex-direction: column; gap: 6px; }
.objects { flex: none; }
.procs { flex: 1; min-height: 0; border-bottom: 0; }
.wave { flex: 1; border-bottom: 0; border-right: 0; }
.ptitle { display: flex; align-items: center; height: 19px; flex: none; background: var(--face); padding-right: 1px; }
.ptitle h2 { font-size: 13px; line-height: 18px; padding: 0 3px; }
.picon { width: 17px; height: 17px; }
.lines { flex: 1; height: 7px; border: 1px solid #777; border-width: 1px 0; margin: 0 1px; box-shadow: inset 0 1px #fff, 0 1px #fff; }
.dots { width: 18px; height: 7px; margin: 0 2px; background: radial-gradient(circle, #222 0 0.7px, transparent 0.8px) 0 0 / 3px 3px; }
.ptitle button { width: 12px; height: 13px; margin-left: 2px; border: 1px solid; border-color: #fff #999 #999 #fff; }
.ptitle button svg { width: 10px; height: 11px; }
.ptitle .lines + button { margin-left: 4px; }
.active { background: #99b4d1; padding-right: 0; }
.active .lines { border-color: #000; margin-right: 0; }

.grid { border-spacing: 0; table-layout: fixed; width: 100%; }
.grid th { height: 20px; padding: 0 0 0 2px; font-weight: normal; line-height: 18px; text-align: left; background: var(--face); border-top: 1px solid var(--line); border-bottom: 1px solid var(--line); border-right: 1px solid var(--line); box-shadow: inset 1px 1px #fff; white-space: nowrap; overflow: hidden; }
.simgrid th { font-size: 12px; }
.grid th:first-child { padding: 0; }
.grid th:last-child { border-right: 0; }
.grid td { padding: 0; height: 20px; line-height: 20px; white-space: nowrap; overflow: hidden; }
.grid td:last-child { overflow: visible; }
.hd { display: flex; align-items: center; height: 18px; }
.hd > span { flex: 1; padding-left: 2px; border-left: 1px solid var(--line); }
.filt { width: 9px; height: 18px; }
.sort { width: 8px; height: 8px; margin-right: 3px; fill: none; stroke: #777; }
.c-inst { width: 224px; } .c-unit { width: 94px; } .c-type { width: 109px; } .c-name { width: 175px; } .c-filter { width: 128px; }
.simgrid tbody::before, .procgrid tbody::before { content: ""; display: block; height: 4px; }
.node { display: flex; height: 20px; line-height: 20px; white-space: nowrap; overflow: hidden; }
.slot { width: 18px; height: 20px; flex: none; display: block; }
.node > svg.slot:last-of-type { margin-right: 3px; }
.ex { position: relative; background: linear-gradient(#808080, #808080) 13px 10px / 5px 1px no-repeat; }
.branch { background: linear-gradient(#808080, #808080) 13px 10px / 5px 1px no-repeat, linear-gradient(#808080, #808080) 8px 0 / 1px 20px no-repeat; }
.ex::before { content: ""; position: absolute; left: 3px; top: 4px; width: 11px; height: 11px; border: 1px solid #777; border-radius: 1px; background: linear-gradient(#111, #111) 2px 4px / 5px 1px no-repeat, linear-gradient(#111, #111) 4px 2px / 1px 5px no-repeat, #fff; }
.minus::before { background: linear-gradient(#111, #111) 2px 4px / 5px 1px no-repeat, #fff; }

.pbody { display: flex; min-height: 0; flex: 1; }
.pleft { flex: 1; min-width: 0; }
.objgrid { color: #fff; }
.objgrid td:last-child { font-size: 12px; }
.objgrid thead, .procgrid thead { color: #000; }
.objgrid tbody { background: #505a8c; }
.objgrid .cut td { height: 7px; }
.cut .node { height: 7px; align-items: flex-end; line-height: 20px; }
.grid .sel td { background: #bfcbd9; color: #000; border-bottom: 1px solid #505a8c; line-height: 19px; }
.sel .node { height: 19px; }
.hscroll { display: flex; height: 14px; margin-top: 2px; }
.hscroll button { width: 20px; border: 1px solid; border-color: #fff var(--line) var(--line) #fff; display: grid; place-items: center; }
.hscroll svg, .vscroll svg { width: 10px; height: 10px; }
.hthumb { width: 204px; flex: none; border: 1px solid; border-color: #fff var(--line) var(--line) #fff; }
.trough { background: conic-gradient(#fff 25%, #e6e6e6 0 50%, #fff 0 75%, #e6e6e6 0) 0 0 / 2px 2px; flex: 1; }
.vscroll { width: 18px; display: flex; flex-direction: column; flex: none; border-left: 1px solid #fff; }
.vscroll button { height: 20px; border: 1px solid; border-color: #fff var(--line) var(--line) #fff; display: grid; place-items: center; }
.vscroll .t-obj { flex: none; height: 73px; }
.vthumb { border: 1px solid; border-color: #fff var(--line) var(--line) #fff; }
.grow { flex: 1; }
.corner { height: 18px; }
.t-proc { height: 30px; }
.narrow { width: 15px; margin-left: 3px; }
.procs .pleft { background: #8aa2ff; overflow: hidden; }
.procgrid tbody { color: #fff; }

.wbody { flex: 1; min-height: 0; display: flex; background: #808080; border-top: 1px solid #555; color: #fff; margin-top: 1px; }
.wcol { display: flex; flex-direction: column; border-right: 2px solid #fff; flex: none; }
.names { width: 161px; }
.values { width: 104px; font-size: 12px; }
.plot { flex: 1; min-width: 0; background: #000; border-right: 0; border-left: 1px solid #ffd21e; }
.whead { height: 21px; flex: none; display: flex; align-items: center; border-bottom: 2px solid #fff; padding-left: 8px; gap: 2px; }
.msgs { justify-content: flex-end; padding-right: 4px; font-size: 13px; }
.wrows { flex: 1; padding-top: 3px; }
.names .wrows { border-left: 9px solid #fff; }
.values .val { height: 20px; padding-left: 3px; }
.wrows .lit { background: #fff; color: #000; border-bottom: 1px solid #808080; }
.wrows .end { border-bottom: 2px solid #111; }
.signals { width: 100%; flex: 1; min-height: 0; }
.signals text { fill: #fff; font: 12px var(--ui); }
.marks { position: absolute; left: -3px; top: -1px; width: 1369px; height: 815px; pointer-events: none; }
```
